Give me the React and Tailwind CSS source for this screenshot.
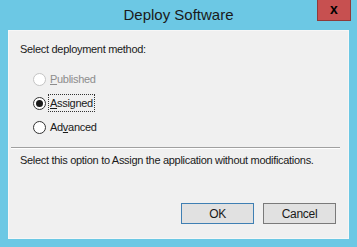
import React from "react";

function Radio({ checked, disabled }) {
  return (
    <span
      className={`w-[13px] h-[13px] rounded-full border flex items-center justify-center bg-white ${
        disabled ? "border-[#c4c4c4] bg-[#f4f4f4]" : "border-[#333333]"
      }`}
    >
      {checked && <span className="w-[7px] h-[7px] rounded-full bg-[#1a1a1a]" />}
    </span>
  );
}

export default function App() {
  return (
    <div
      className="w-[357px] h-[247px] bg-[#6cc8e4] flex flex-col overflow-hidden"
      style={{ fontFamily: '"Liberation Sans", Arial, sans-serif' }}
    >
      <div className="relative h-[30px] flex items-center justify-center">
        <span className="text-[15px] text-[#1a1a1a] mt-[1px]">Deploy Software</span>
        <div className="absolute right-[6px] top-0 w-[34px] h-[21px] bg-[#c75050] border border-[#8f3a3a] border-t-0 flex items-center justify-center">
          <span className="text-[14px] font-bold text-black leading-none -mt-[2px]">x</span>
        </div>
      </div>
      <div className="mx-[8px] h-[209px] bg-[#f0f0f0] border border-[#f7f7f7] flex flex-col text-[11px] tracking-[-0.3px] text-[#1a1a1a]">
        <div className="pl-[11px] pt-[11px] leading-[14px]">Select deployment method:</div>
        <div className="flex flex-col pl-[24px] pt-[16px] gap-[10px]">
          <div className="flex items-center gap-[4px] h-[14px] text-[#8d8d8d]">
            <Radio disabled />
            <span><span className="underline">P</span>ublished</span>
          </div>
          <div className="flex items-center gap-[3px] h-[14px]">
            <Radio checked />
            <span className="outline outline-1 outline-dotted outline-[#333] px-[1px]">
              <span className="underline">A</span>ssigned
            </span>
          </div>
          <div className="flex items-center gap-[4px] h-[14px]">
            <Radio />
            <span>Ad<span className="underline">v</span>anced</span>
          </div>
        </div>
        <div className="mt-[13px] mx-[2px] w-[329px] h-[2px] border-t border-[#a0a0a0] border-b border-b-white" />
        <div className="pl-[11px] pt-[4px] leading-[14px] whitespace-nowrap">
          Select this option to Assign the application without modifications.
        </div>
        <div className="flex justify-end gap-[9px] pr-[12px] mt-auto mb-[14px]">
          <button className="w-[73px] h-[21px] bg-[#e1e1e1] border border-[#3f7fb3] text-[12px] text-[#1a1a1a]">
            OK
          </button>
          <button className="w-[73px] h-[21px] bg-[#e1e1e1] border border-[#7a7a7a] text-[12px] text-[#1a1a1a]">
            Cancel
          </button>
        </div>
      </div>
    </div>
  );
}
